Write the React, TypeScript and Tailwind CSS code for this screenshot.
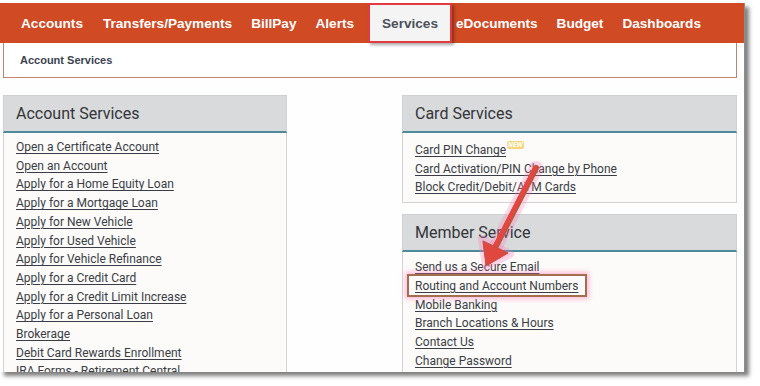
import React from "react";

const linkCls =
  "block w-fit text-[12px] leading-[18.7px] text-[#3a3d45] underline underline-offset-[2px] decoration-[1px] whitespace-nowrap";

function Panel({
  title,
  links,
  pt,
  children,
  grow,
}: {
  title: string;
  links?: string[];
  pt: string;
  children?: React.ReactNode;
  grow?: boolean;
}) {
  return (
    <div className={"flex flex-col " + (grow ? "flex-1" : "")}>
      <div className="h-[38px] flex items-center pl-[12px] bg-[#d9dadc] border border-[#cfd0d2] border-b-2 border-b-[#4d8b9b] text-[16px] text-[#333539]">
        {title}
      </div>
      <div
        className={
          "bg-[#fcfbfa] border border-t-0 border-[#d3d3d3] px-[12px] pb-[5px] " +
          pt +
          (grow ? " flex-1" : "")
        }
      >
        {links?.map((l) => (
          <a key={l} className={linkCls}>
            {l}
          </a>
        ))}
        {children}
      </div>
    </div>
  );
}

export default function App() {
  const navItem = "text-white font-bold text-[13.6px] whitespace-nowrap";
  return (
    <div
      className="w-[760px] h-[386px] bg-white pt-[3px] overflow-hidden"
      style={{ fontFamily: "Roboto, 'Liberation Sans', sans-serif" }}
    >
      <div className="relative w-[745px] h-[369px] overflow-hidden bg-[#fefefe] border-r border-[#8c8c8c] shadow-[4px_4px_4px_rgba(0,0,0,0.5)]">
        {/* Nav */}
        <div
          className="h-[40px] bg-[#d04a24] flex items-stretch"
          style={{ fontFamily: "'Liberation Sans', Arial, sans-serif" }}
        >
          <div className="flex items-center pt-[3px] ml-[21px]">
            <span className={navItem}>Accounts</span>
            <span className={navItem + " ml-[20px]"}>Transfers/Payments</span>
            <span className={navItem + " ml-[19px]"}>BillPay</span>
            <span className={navItem + " ml-[19px]"}>Alerts</span>
          </div>
          <div className="ml-[14px] flex items-center pt-[3px] px-[12px] bg-[#f4f4f4] border-2 border-[#e23a3f] shadow-[2px_2px_3px_rgba(0,0,0,0.35)]">
            <span className="text-[#4b505a] font-bold text-[13.6px]">Services</span>
          </div>
          <div className="flex items-center pt-[3px] ml-[4px]">
            <span className={navItem}>eDocuments</span>
            <span className={navItem + " ml-[19px]"}>Budget</span>
            <span className={navItem + " ml-[19px]"}>Dashboards</span>
          </div>
        </div>

        {/* Sub bar */}
        <div
          className="ml-[3px] w-[734px] h-[35px] flex items-center pl-[16px] bg-white border border-t-0 border-[#c2826f]"
          style={{ fontFamily: "'Liberation Sans', Arial, sans-serif" }}
        >
          <span className="text-[11px] font-bold text-[#3c4350]">Account Services</span>
        </div>

        {/* Content */}
        <div className="flex pt-[17px]">
          <div className="ml-[3px] w-[284px] h-[300px] flex flex-col">
            <Panel
              title="Account Services"
              pt="pt-[5px]"
              grow
              links={[
                "Open a Certificate Account",
                "Open an Account",
                "Apply for a Home Equity Loan",
                "Apply for a Mortgage Loan",
                "Apply for New Vehicle",
                "Apply for Used Vehicle",
                "Apply for Vehicle Refinance",
                "Apply for a Credit Card",
                "Apply for a Credit Limit Increase",
                "Apply for a Personal Loan",
                "Brokerage",
                "Debit Card Rewards Enrollment",
                "IRA Forms - Retirement Central",
              ]}
            />
          </div>
          <div className="ml-[115px] w-[335px] flex flex-col gap-[11px]">
            <Panel title="Card Services" pt="pt-[8px]">
              <div className="flex items-start">
                <a className={linkCls}>Card PIN Change</a>
                <span className="mt-[0px] ml-[1px] px-[1px] rounded-[2px] bg-[#f5d67a] text-white text-[7px] leading-[8px] font-bold italic">
                  NEW
                </span>
              </div>
              <a className={linkCls}>Card Activation/PIN Change by Phone</a>
              <a className={linkCls}>Block Credit/Debit/ATM Cards</a>
            </Panel>
            <Panel
              title="Member Service"
              pt="pt-[6px]"
              links={[
                "Send us a Secure Email",
                "Routing and Account Numbers",
                "Mobile Banking",
                "Branch Locations & Hours",
                "Contact Us",
                "Change Password",
              ]}
            />
          </div>
        </div>

        {/* Highlight box */}
        <div className="absolute left-[407px] top-[271px] w-[180px] h-[23px] border-[2.5px] border-[#a26e4d] shadow-[0_0_5px_2px_rgba(255,110,170,0.45)]" />

        {/* Arrow */}
        <svg
          className="absolute left-0 top-0"
          width="745"
          height="369"
          viewBox="0 0 745 369"
        >
          <line x1="536" y1="165" x2="495" y2="245" stroke="#ff7ab8" strokeOpacity="0.3" strokeWidth="14" strokeLinecap="round" />
          <polygon points="486,263 482,236 510,251" fill="#ff7ab8" fillOpacity="0.3" stroke="#ff7ab8" strokeOpacity="0.3" strokeWidth="8" strokeLinejoin="round" />
          <line x1="536" y1="165" x2="496" y2="243" stroke="#b9573f" strokeWidth="6" strokeLinecap="round" />
          <line x1="535" y1="165" x2="495" y2="243" stroke="#e6463f" strokeWidth="4" strokeLinecap="round" />
          <polygon points="486,263 483,238 508,250" fill="#e0473e" stroke="#c4503e" strokeWidth="1" />
        </svg>
      </div>
    </div>
  );
}
